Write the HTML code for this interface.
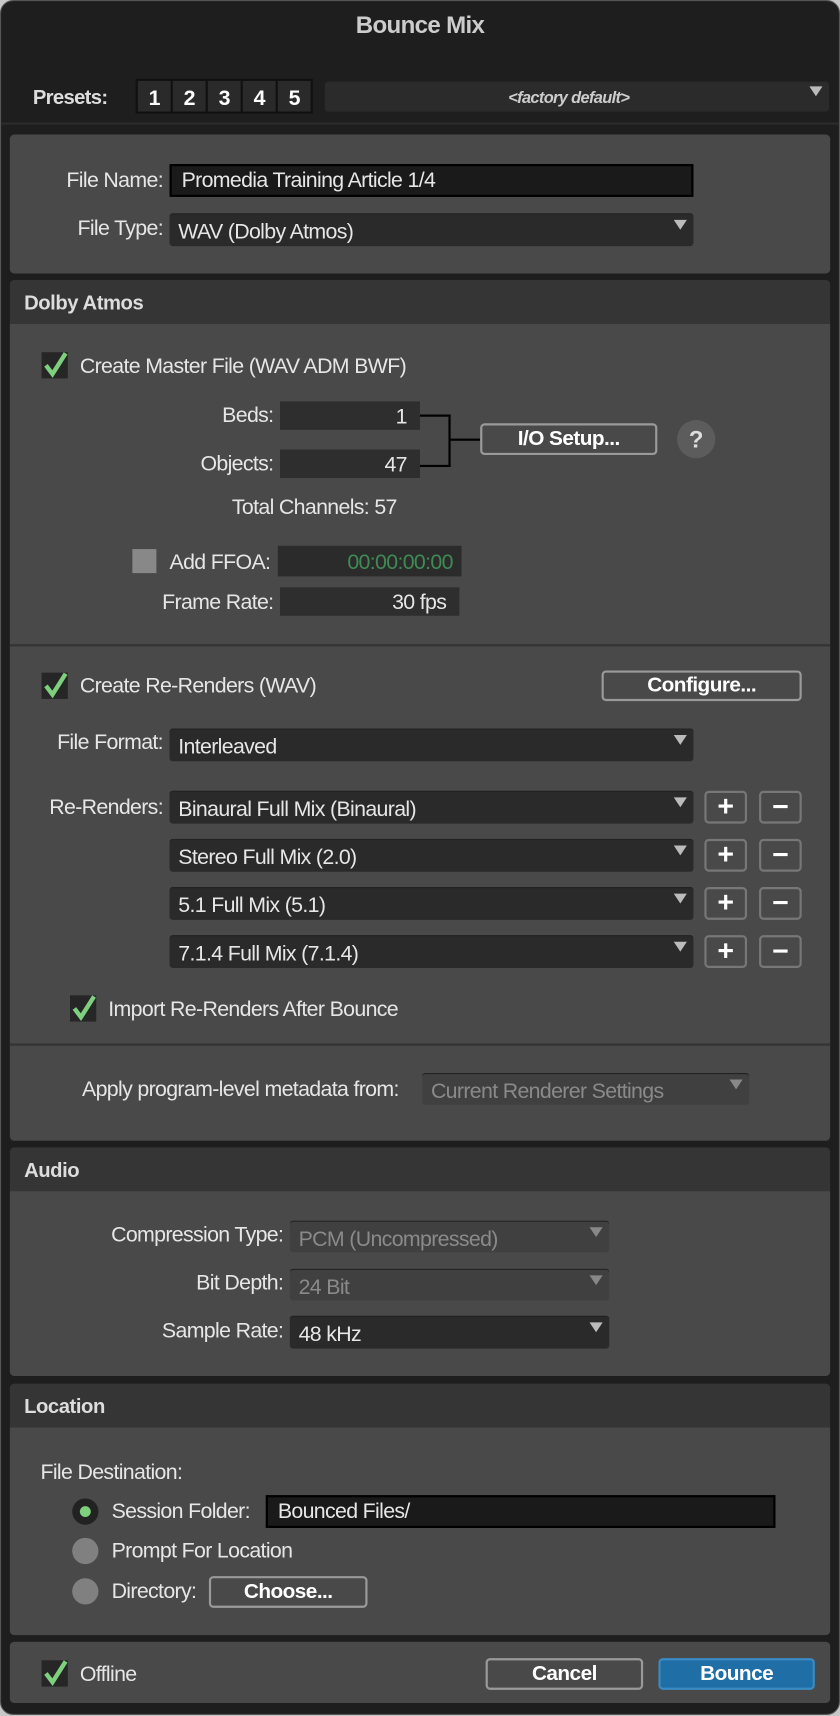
<!DOCTYPE html>
<html><head><meta charset="utf-8"><style>
html,body{margin:0;padding:0;background:#c8c8c8;width:840px;height:1716px;overflow:hidden}
#w{position:absolute;left:0;top:0;width:768px;height:1568px;transform:scale(1.09375);transform-origin:0 0;font-family:"Liberation Sans",sans-serif;color:#e6e6e6}
#frame{position:absolute;left:0;top:0;width:766px;height:1566px;background:#1e1e1e;border:1px solid #555;border-radius:12px}
.a{position:absolute}
.t{position:absolute;font-size:19.5px;white-space:nowrap;letter-spacing:-0.6px;line-height:20px}
.r{text-align:right}
.panel{position:absolute;left:9px;width:750px;background:#494949;border-radius:4px}
.hdr{position:absolute;left:9px;width:750px;height:40px;background:#353535;border-radius:4px 4px 0 0}
.hdr span{position:absolute;left:13px;top:10px;font-size:18.5px;font-weight:bold;color:#ddd;letter-spacing:-0.4px}
.dd{position:absolute;background:#2a2a2a;border-radius:3px;box-shadow:inset 0 1px 0 #222}
.dd span{position:absolute;left:8px;top:5px;font-size:19.5px;letter-spacing:-0.6px;white-space:nowrap}
.dd i{position:absolute;right:6px;top:6px;width:0;height:0;border-left:6px solid transparent;border-right:6px solid transparent;border-top:9px solid #bbb}
.dis span{color:#8a8a8a}.dis{background:#404040}.dis i{border-top-color:#888}
.fld{position:absolute;background:#2e2e2e}
.fld span{position:absolute;right:12px;top:4px;font-size:19.5px;letter-spacing:-0.6px}
.btn{position:absolute;border:2px solid #9a9a9a;border-radius:4px;box-sizing:border-box;text-align:center;font-weight:bold;font-size:19px;color:#fff;letter-spacing:-0.5px}
.cb{position:absolute;width:24px;height:24px;background:#262626}
.sep{position:absolute;left:9px;width:750px;height:2px;background:#333}
.radio{position:absolute;width:24px;height:24px;border-radius:50%;background:#808080}
.pm{position:absolute;width:39px;height:30px;border:2px solid #777;border-radius:4px;box-sizing:border-box;color:#fff;font-weight:bold;font-size:26px;text-align:center;line-height:24px}
</style></head><body><div id="w">
<div id="frame"></div>
<div class="t" style="left:0;width:768px;text-align:center;top:13px;font-size:22px;font-weight:bold;color:#ccc">Bounce Mix</div>
<div class="t" style="left:30px;top:79px;font-weight:bold;color:#ddd;font-size:18.5px">Presets:</div>
<div class="a" style="left:124px;top:72px;width:162px;height:32px;background:#111"></div>
<div class="a" style="left:126px;top:74px;width:30px;height:28px;background:#2a2a2a"></div>
<div class="a" style="left:158px;top:74px;width:30px;height:28px;background:#2a2a2a"></div>
<div class="a" style="left:190px;top:74px;width:30px;height:28px;background:#2a2a2a"></div>
<div class="a" style="left:222px;top:74px;width:30px;height:28px;background:#2a2a2a"></div>
<div class="a" style="left:254px;top:74px;width:30px;height:28px;background:#2a2a2a"></div>
<div class="t" style="left:126px;width:30px;text-align:center;top:80px;font-weight:bold;color:#fff">1</div>
<div class="t" style="left:158px;width:30px;text-align:center;top:80px;font-weight:bold;color:#fff">2</div>
<div class="t" style="left:190px;width:30px;text-align:center;top:80px;font-weight:bold;color:#fff">3</div>
<div class="t" style="left:222px;width:30px;text-align:center;top:80px;font-weight:bold;color:#fff">4</div>
<div class="t" style="left:254px;width:30px;text-align:center;top:80px;font-weight:bold;color:#fff">5</div>
<div class="dd" style="left:297px;top:74px;width:461px;height:28px;background:#2b2b2b"><i style="top:5px"></i></div>
<div class="t" style="left:297px;width:446px;text-align:center;top:80px;font-size:15px;font-style:italic;font-weight:bold;color:#ccc">&lt;factory default&gt;</div>
<div class="a" style="left:1px;top:112px;width:766px;height:2px;background:#2c2c2c"></div>

<div class="panel" style="top:123px;height:127px"></div>
<div class="t r" style="left:0;width:149px;top:155px">File Name:</div>
<div class="a" style="left:155px;top:150px;width:479px;height:30px;background:#1a1a1a;border:2px solid #000;box-sizing:border-box"></div>
<div class="t" style="left:166px;top:155px">Promedia Training Article 1/4</div>
<div class="t r" style="left:0;width:149px;top:199px">File Type:</div>
<div class="dd" style="left:155px;top:195px;width:479px;height:30px"><span style="top:6px">WAV (Dolby Atmos)</span><i></i></div>

<div class="hdr" style="top:256px"><span>Dolby Atmos</span></div>
<div class="panel" style="top:296px;height:747px;border-radius:0 0 4px 4px"></div>
<div class="cb" style="left:38px;top:322px"></div>
<svg class="a" style="left:38px;top:320px" width="26" height="26"><path d="M4 14 L10 22 L22 3" stroke="#7ecf7e" stroke-width="4" fill="none"/></svg>
<div class="t" style="left:73px;top:325px">Create Master File (WAV ADM BWF)</div>
<div class="t r" style="left:0;width:250px;top:370px">Beds:</div>
<div class="fld" style="left:256px;top:367px;width:128px;height:26px"><span style="top:3px">1</span></div>
<div class="t r" style="left:0;width:250px;top:414px">Objects:</div>
<div class="fld" style="left:256px;top:411px;width:128px;height:26px"><span style="top:3px">47</span></div>
<div class="a" style="left:384px;top:379px;width:26px;height:44px;border:2px solid #000;border-left:none"></div>
<div class="a" style="left:411px;top:401px;width:28px;height:2px;background:#000"></div>
<div class="btn" style="left:439px;top:387px;width:162px;height:29px;line-height:25px">I/O Setup...</div>
<div class="a" style="left:619px;top:384px;width:35px;height:35px;border-radius:50%;background:#5c5c5c;color:#ddd;font-weight:bold;font-size:22px;text-align:center;line-height:35px">?</div>
<div class="t" style="left:212px;top:454px">Total Channels: 57</div>
<div class="a" style="left:121px;top:502px;width:22px;height:22px;background:#888"></div>
<div class="t" style="left:155px;top:504px">Add FFOA:</div>
<div class="fld" style="left:254px;top:499px;width:168px;height:28px;background:#2b2b2b"><span style="right:8px;color:#3f8a55">00:00:00:00</span></div>
<div class="t r" style="left:0;width:250px;top:541px">Frame Rate:</div>
<div class="fld" style="left:256px;top:537px;width:164px;height:26px"><span style="top:3px">30 fps</span></div>
<div class="sep" style="top:589px"></div>
<div class="cb" style="left:38px;top:615px"></div>
<svg class="a" style="left:38px;top:613px" width="26" height="26"><path d="M4 14 L10 22 L22 3" stroke="#7ecf7e" stroke-width="4" fill="none"/></svg>
<div class="t" style="left:73px;top:617px">Create Re-Renders (WAV)</div>
<div class="btn" style="left:550px;top:613px;width:183px;height:28px;line-height:24px">Configure...</div>
<div class="t r" style="left:0;width:149px;top:669px">File Format:</div>
<div class="dd" style="left:155px;top:666px;width:479px;height:30px"><span style="top:6px">Interleaved</span><i></i></div>
<div class="t r" style="left:0;width:149px;top:728px">Re-Renders:</div>
<div class="dd" style="left:155px;top:723px;width:479px;height:30px"><span style="top:6px">Binaural Full Mix (Binaural)</span><i></i></div>
<div class="dd" style="left:155px;top:767px;width:479px;height:30px"><span style="top:6px">Stereo Full Mix (2.0)</span><i></i></div>
<div class="dd" style="left:155px;top:811px;width:479px;height:30px"><span style="top:6px">5.1 Full Mix (5.1)</span><i></i></div>
<div class="dd" style="left:155px;top:855px;width:479px;height:30px"><span style="top:6px">7.1.4 Full Mix (7.1.4)</span><i></i></div>
<div class="pm" style="left:644px;top:723px">+</div><div class="pm" style="left:694px;top:723px">−</div>
<div class="pm" style="left:644px;top:767px">+</div><div class="pm" style="left:694px;top:767px">−</div>
<div class="pm" style="left:644px;top:811px">+</div><div class="pm" style="left:694px;top:811px">−</div>
<div class="pm" style="left:644px;top:855px">+</div><div class="pm" style="left:694px;top:855px">−</div>
<div class="cb" style="left:64px;top:910px"></div>
<svg class="a" style="left:64px;top:908px" width="26" height="26"><path d="M4 14 L10 22 L22 3" stroke="#7ecf7e" stroke-width="4" fill="none"/></svg>
<div class="t" style="left:99px;top:913px">Import Re-Renders After Bounce</div>
<div class="sep" style="top:954px"></div>
<div class="t" style="left:75px;top:986px">Apply program-level metadata from:</div>
<div class="dd dis" style="left:386px;top:981px;width:299px;height:29px"><span style="top:6px">Current Renderer Settings</span><i></i></div>

<div class="hdr" style="top:1049px"><span>Audio</span></div>
<div class="panel" style="top:1089px;height:169px;border-radius:0 0 4px 4px"></div>
<div class="t r" style="left:0;width:259px;top:1119px">Compression Type:</div>
<div class="dd dis" style="left:265px;top:1116px;width:292px;height:29px"><span style="top:6px">PCM (Uncompressed)</span><i></i></div>
<div class="t r" style="left:0;width:259px;top:1163px">Bit Depth:</div>
<div class="dd dis" style="left:265px;top:1160px;width:292px;height:29px"><span style="top:6px">24 Bit</span><i></i></div>
<div class="t r" style="left:0;width:259px;top:1207px">Sample Rate:</div>
<div class="dd" style="left:265px;top:1203px;width:292px;height:30px"><span style="top:6px">48 kHz</span><i></i></div>

<div class="hdr" style="top:1265px"><span>Location</span></div>
<div class="panel" style="top:1305px;height:190px;border-radius:0 0 4px 4px"></div>
<div class="t" style="left:37px;top:1336px">File Destination:</div>
<div class="radio" style="left:66px;top:1370px;background:#222"></div>
<div class="a" style="left:73px;top:1377px;width:10px;height:10px;border-radius:50%;background:#7ecf7e"></div>
<div class="t" style="left:102px;top:1372px">Session Folder:</div>
<div class="a" style="left:243px;top:1367px;width:466px;height:30px;background:#1a1a1a;border:2px solid #000;box-sizing:border-box"></div>
<div class="t" style="left:254px;top:1372px">Bounced Files/</div>
<div class="radio" style="left:66px;top:1406px"></div>
<div class="t" style="left:102px;top:1408px">Prompt For Location</div>
<div class="radio" style="left:66px;top:1443px"></div>
<div class="t" style="left:102px;top:1445px">Directory:</div>
<div class="btn" style="left:191px;top:1441px;width:145px;height:29px;line-height:25px">Choose...</div>

<div class="panel" style="top:1501px;height:56px"></div>
<div class="cb" style="left:38px;top:1518px"></div>
<svg class="a" style="left:38px;top:1516px" width="26" height="26"><path d="M4 14 L10 22 L22 3" stroke="#7ecf7e" stroke-width="4" fill="none"/></svg>
<div class="t" style="left:73px;top:1521px">Offline</div>
<div class="btn" style="left:444px;top:1516px;width:144px;height:29px;line-height:25px">Cancel</div>
<div class="btn" style="left:602px;top:1516px;width:143px;height:29px;line-height:25px;background:#1f6ea6;border-color:#3a8ac4">Bounce</div>
</div></body></html>
